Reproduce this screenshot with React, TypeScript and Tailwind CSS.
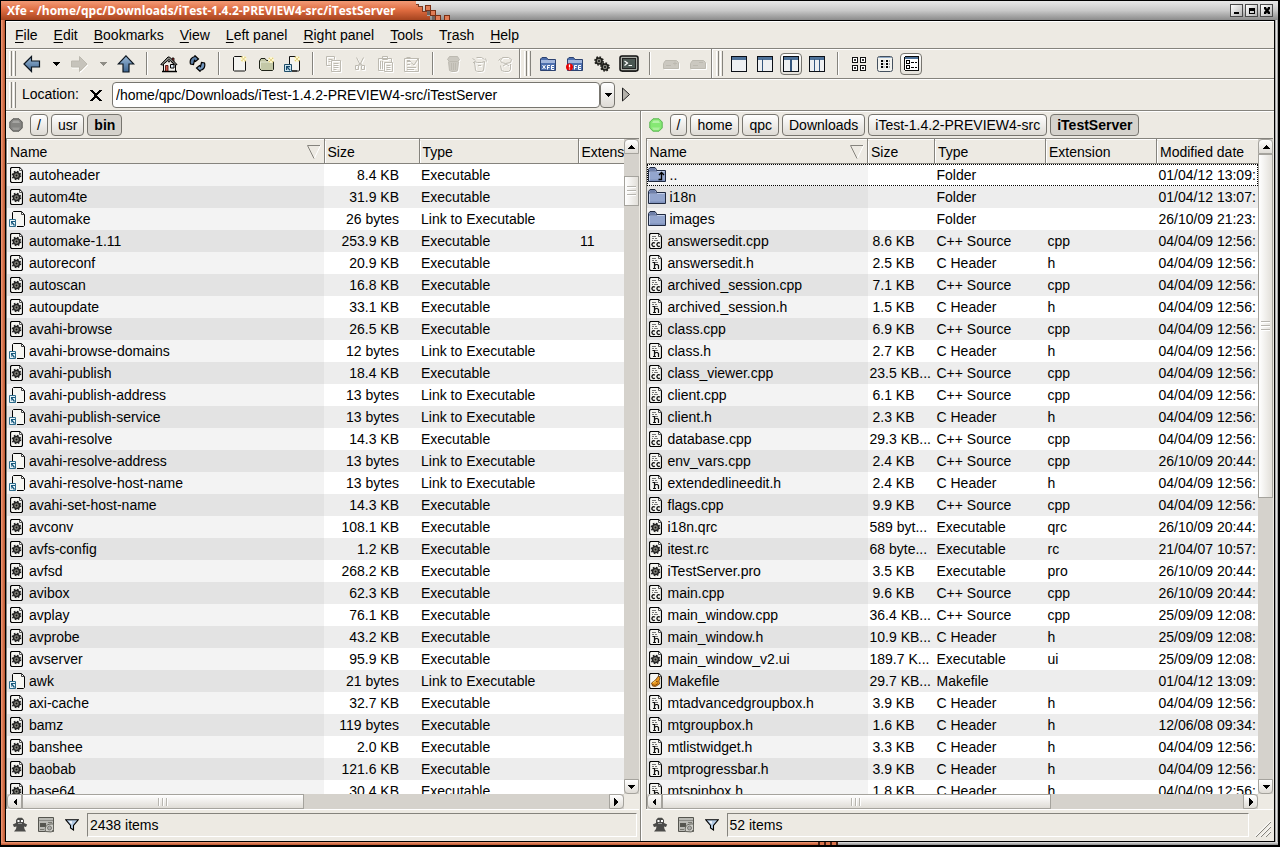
import React from "react";

type Kind = "exe" | "link" | "up" | "folder" | "cc" | "h" | "make";
type Row = { kind: Kind; name: string; size: string; type: string; ext?: string; date?: string };

const leftRows: Row[] = [
  ["autoheader", "8.4 KB"], ["autom4te", "31.9 KB"], ["automake", "26 bytes", "l"], ["automake-1.11", "253.9 KB", "", "11"],
  ["autoreconf", "20.9 KB"], ["autoscan", "16.8 KB"], ["autoupdate", "33.1 KB"], ["avahi-browse", "26.5 KB"],
  ["avahi-browse-domains", "12 bytes", "l"], ["avahi-publish", "18.4 KB"], ["avahi-publish-address", "13 bytes", "l"],
  ["avahi-publish-service", "13 bytes", "l"], ["avahi-resolve", "14.3 KB"], ["avahi-resolve-address", "13 bytes", "l"],
  ["avahi-resolve-host-name", "13 bytes", "l"], ["avahi-set-host-name", "14.3 KB"], ["avconv", "108.1 KB"],
  ["avfs-config", "1.2 KB"], ["avfsd", "268.2 KB"], ["avibox", "62.3 KB"], ["avplay", "76.1 KB"], ["avprobe", "43.2 KB"],
  ["avserver", "95.9 KB"], ["awk", "21 bytes", "l"], ["axi-cache", "32.7 KB"], ["bamz", "119 bytes"], ["banshee", "2.0 KB"],
  ["baobab", "121.6 KB"], ["base64", "30.4 KB"],
].map(([name, size, link, ext]) => ({
  kind: link ? "link" : "exe",
  name,
  size,
  type: link ? "Link to Executable" : "Executable",
  ext,
}));

const typeNames: Record<Kind, string> = {
  exe: "Executable", link: "Link", up: "Folder", folder: "Folder", cc: "C++ Source", h: "C Header", make: "Makefile",
};

const rightRows: Row[] = (
  [
    ["up", "..", "", "", "01/04/12 13:09:"],
    ["folder", "i18n", "", "", "01/04/12 13:07:"],
    ["folder", "images", "", "", "26/10/09 21:23:"],
    ["cc", "answersedit.cpp", "8.6 KB", "cpp", "04/04/09 12:56:"],
    ["h", "answersedit.h", "2.5 KB", "h", "04/04/09 12:56:"],
    ["cc", "archived_session.cpp", "7.1 KB", "cpp", "04/04/09 12:56:"],
    ["h", "archived_session.h", "1.5 KB", "h", "04/04/09 12:56:"],
    ["cc", "class.cpp", "6.9 KB", "cpp", "04/04/09 12:56:"],
    ["h", "class.h", "2.7 KB", "h", "04/04/09 12:56:"],
    ["cc", "class_viewer.cpp", "23.5 KB...", "cpp", "04/04/09 12:56:"],
    ["cc", "client.cpp", "6.1 KB", "cpp", "04/04/09 12:56:"],
    ["h", "client.h", "2.3 KB", "h", "04/04/09 12:56:"],
    ["cc", "database.cpp", "29.3 KB...", "cpp", "04/04/09 12:56:"],
    ["cc", "env_vars.cpp", "2.4 KB", "cpp", "26/10/09 20:44:"],
    ["h", "extendedlineedit.h", "2.4 KB", "h", "04/04/09 12:56:"],
    ["cc", "flags.cpp", "9.9 KB", "cpp", "04/04/09 12:56:"],
    ["exe", "i18n.qrc", "589 byt...", "qrc", "26/10/09 20:44:"],
    ["exe", "itest.rc", "68 byte...", "rc", "21/04/07 10:57:"],
    ["exe", "iTestServer.pro", "3.5 KB", "pro", "26/10/09 20:44:"],
    ["cc", "main.cpp", "9.6 KB", "cpp", "26/10/09 20:44:"],
    ["cc", "main_window.cpp", "36.4 KB...", "cpp", "25/09/09 12:08:"],
    ["h", "main_window.h", "10.9 KB...", "h", "25/09/09 12:08:"],
    ["exe", "main_window_v2.ui", "189.7 K...", "ui", "25/09/09 12:08:"],
    ["make", "Makefile", "29.7 KB...", "", "01/04/12 13:09:"],
    ["h", "mtadvancedgroupbox.h", "3.9 KB", "h", "04/04/09 12:56:"],
    ["h", "mtgroupbox.h", "1.6 KB", "h", "12/06/08 09:34:"],
    ["h", "mtlistwidget.h", "3.3 KB", "h", "04/04/09 12:56:"],
    ["h", "mtprogressbar.h", "3.9 KB", "h", "04/04/09 12:56:"],
    ["h", "mtspinbox.h", "1.8 KB", "h", "04/04/09 12:56:"],
  ] as [Kind, string, string, string, string][]
).map(([kind, name, size, ext, date]) => ({ kind, name, size, type: typeNames[kind], ext, date }));

/* ---------- icons ---------- */

function Svg({ w, h, crisp, children }: { w: number; h: number; crisp?: boolean; children: React.ReactNode }) {
  return (
    <svg width={w} height={h} viewBox={`0 0 ${w} ${h}`} fill="none" aria-hidden="true" className="block shrink-0" shapeRendering={crisp ? "crispEdges" : "auto"}>
      {children}
    </svg>
  );
}

const Gear = ({ x, y, r, c = "#222" }: { x: number; y: number; r: number; c?: string }) => (
  <g>
    <circle cx={x} cy={y} r={r} fill="#85857c" stroke={c} strokeWidth="1.5" />
    <circle cx={x} cy={y} r={r + 1} stroke={c} strokeWidth="1.6" strokeDasharray={`${((r + 1) * 6.283) / 16}`} />
    <circle cx={x} cy={y} r={r / 3} fill="#111" />
  </g>
);

const Page = () => (
  <g>
    <path d="M.5 1.500l1-1h8l3 3v11l-1 1h-10l-1-1z" fill="#f6f6f2" stroke="#000" strokeWidth="1.200" />
    <path d="M9.500 1v2.500h3" fill="#fff" stroke="#555" />
  </g>
);

function FileIcon({ kind }: { kind: Kind }) {
  if (kind === "link")
    return (
      <Svg w={16} h={16}>
        <path d="M3.500 9V1.500l1-1h8l3 3v11l-1 1H8" fill="#f6f6f2" stroke="#000" />
        <path d="M12.500 1v2.500h2.500" stroke="#444" fill="#fff" />
        <path d="M.5 8.500h6v7h-6z" fill="#eaf6fa" stroke="#2d6b8a" />
        <path d="M2 10h4v1H3.500l2.500 3-1 1-2.500-3v2H2z" fill="#17597d" />
        <path d="M8 15.500h6" stroke="#000" />
      </Svg>
    );
  if (kind === "folder" || kind === "up")
    return (
      <Svg w={18} h={16}>
        <path d="M.5 14.500v-12l1.500-2h5l1.500 2v1h9v11z" fill="#93a5cd" stroke="#1f2940" />
        <path d="M1.500 13.500v-9h15" stroke="#c3cfe9" />
        <path d="M2 2h5M1 4h8" stroke="#4a5b85" />
        <path d="M2 12.500h15v1.500H2z" fill="#7f92bd" />
        {kind === "up" && <path d="M10.500 12.500h3V6M11 8l2.500-2.500L16 8" stroke="#000" strokeWidth="1.300" />}
      </Svg>
    );
  return (
    <Svg w={13} h={16}>
      <Page />
      {kind === "exe" && <Gear x={6.5} y={8.5} r={3} />}
      {(kind === "cc" || kind === "h") && <path d="M3 3.500h4M3 5.500h2M6 5.500h2M3 7.500h1M5 7.500h4" stroke="#777" />}
      {kind === "cc" && (
        <path d="M5.800 10.200a1.700 1.900 0 1 0 0 2.800M10.800 10.200a1.700 1.900 0 1 0 0 2.800" stroke="#111" strokeWidth="1.300" />
      )}
      {kind === "h" && <path d="M5.500 7v7M4 7.500h1.500M5.500 10.500l1.500-1h1.500l1 1V14M4 13.500h3" stroke="#111" strokeWidth="1.200" />}
      {kind === "make" && (
        <g>
          <path d="M2.500 10l4-3 3-4 1.500 2-1 3 .5 3-4 2.500-3-.5z" fill="#e8961e" stroke="#6b3b05" strokeWidth=".8" />
          <path d="M3 11.500l3 1 3-2M6 8l3 1" stroke="#8d4c08" />
          <path d="M4 9.500l3-1.500" stroke="#ffd76a" />
        </g>
      )}
    </Svg>
  );
}

const Tri = ({ dir, c = "#000" }: { dir: "u" | "d" | "l" | "r"; c?: string }) => (
  <Svg w={8} h={8} crisp>
    <path d={{ u: "M4 2l4 4H0z", d: "M0 2h8L4 6z", l: "M2 4l4-4v8z", r: "M6 4L2 0v8z" }[dir]} fill={c} />
  </Svg>
);

const Arrow = ({ kind }: { kind: "back" | "fwd" | "up" }) => (
  <Svg w={18} h={18}>
    <defs>
      <linearGradient id="steel" x1="0" y1="0" x2="0" y2="1">
        <stop offset="0" stopColor="#9dbbd8" />
        <stop offset="1" stopColor="#3c6490" />
      </linearGradient>
    </defs>
    {kind === "back" && <path d="M1 9l7.500-7.500V6h8v6h-8v4.500z" fill="url(#steel)" stroke="#0d1620" strokeWidth="1.200" />}
    {kind === "up" && <path d="M9 .8L16.800 9H12v8H6V9H1.200z" fill="url(#steel)" stroke="#0d1620" strokeWidth="1.200" />}
    {kind === "fwd" && (
      <g>
        <path d="M18 10l-7.500 7.500V13H2V6" stroke="#fff" />
        <path d="M17 9L9.500 1.500V6h-8v6h8v4.500z" fill="#c6c3bb" stroke="#bcb9b0" />
      </g>
    )}
  </Svg>
);

const Home = () => (
  <Svg w={18} h={18}>
    <path d="M3.500 9v7.500h12V9" fill="#f3f3ee" stroke="#000" />
    <path d="M12 3h2v5h-2z" fill="#a33" stroke="#000" strokeWidth=".8" />
    <path d="M.8 9.500L8 2h1.500l7.500 7.500-1.500.500L9 4.500 2.500 10z" fill="#8a8a84" stroke="#000" />
    <path d="M5.500 10.500h2.500v6H5.500z" fill="#cf5b4a" stroke="#400" strokeWidth=".8" />
    <path d="M10.500 9.500h3.500v3.500h-3.500z" fill="#dce8f3" stroke="#000" />
    <path d="M8 6.500h2" stroke="#222" strokeWidth="1.500" />
    <path d="M2 16.500h15" stroke="#000" strokeWidth="1.500" />
  </Svg>
);

const Refresh = () => (
  <Svg w={17} h={17}>
    <path d="M1.500 9C.5 5.500 2 2 6 1.500V.7L9.500 4 6.500 6.500 5.500 5.500 4.500 9.500z" fill="#5a7da5" stroke="#000" strokeWidth="1.200" />
    <path d="M15.500 8c1 3.500-.5 7-4.500 7.500v.8L7.500 13l3-2.500 1 1 1-4z" fill="#7397be" stroke="#000" strokeWidth="1.200" />
  </Svg>
);

const Spark = ({ x, y }: { x: number; y: number }) => (
  <g>
    <circle cx={x} cy={y} r="3" fill="#f5e9a8" />
    <path d={`M${x - 3} ${y}h6M${x} ${y - 3}v6`} stroke="#fffce0" strokeWidth="1.400" />
    <path d={`M${x - 2} ${y + 2}l4 -4M${x - 2} ${y - 2}l4 4`} stroke="#d8c36a" strokeWidth=".7" />
  </g>
);

const NewFile = () => (
  <Svg w={16} h={17}>
    <path d="M1.500 2.500l1-1h9l2 3v11l-1 .500h-10l-1-.5z" fill="#f4f4f0" stroke="#111" />
    <Spark x={11.5} y={4} />
  </Svg>
);
const NewFolder = () => (
  <Svg w={17} h={16}>
    <path d="M1.500 12.500V5L3 2.500h4L8.500 4.500h6l1 1v8l-1 1h-11z" fill="#c3c8a6" stroke="#20241a" />
    <path d="M2.500 12V6h11" stroke="#e4e7d3" />
    <Spark x={13} y={4} />
  </Svg>
);
const NewLink = () => (
  <Svg w={17} h={17}>
    <path d="M5.500 9V1.500h8l2 3v11l-1 .500H8" fill="#f4f4f0" stroke="#111" />
    <path d="M.5 9.500h7v7h-7z" fill="#cde6f0" stroke="#1f4d68" />
    <path d="M2 11h4v1.200H4l2.500 2.500-1 1L3.200 13v2H2z" fill="#17496b" />
    <path d="M8 16h5" stroke="#000" />
    <Spark x={13} y={4} />
  </Svg>
);

/* disabled glyphs are engraved: a white copy sits one pixel down and right */
const Engraved = ({ d, fill, w = 18, h = 18 }: { d: string; fill?: boolean; w?: number; h?: number }) => (
  <Svg w={w} h={h}>
    <path d={d} transform="translate(1 1)" stroke="#fff" />
    <path d={d} stroke="#bdbab1" fill={fill ? "#cbc8c0" : "none"} />
  </Svg>
);

const copyD = "M1.500 1.500h8v3M1.500 1.500v9h4M3.500 4.500h4M3.500 6.500h2M6.500 5.500h9v11h-9zM8.500 8.500h5M8.500 10.500h5M8.500 12.500h5M8.500 14.500h3";
const cutD = "M5.500 2.500l4 8M12.500 2.500l-4 8M4.500 10.500h3v4h-3zM10.500 10.500h3v4h-3zM7.500 10l2-2 1.500 2";
const pasteD = "M1.500 3.500h13v4M1.500 3.500v12h5M5.500 1.500h5v3h-5zM7.500 7.500h8v9h-8zM9.500 10.500h4M9.500 12.500h4M9.500 14.500h4M3.500 6v8M5.500 6v8";
const propD = "M1.500 3.500v13h14v-13zM3.500 2.500h4M4 9.500h3M4 12.500h9M4 14.500h7M8 7.500l3 2.500 4.500-7M4 6.500h4M4 5.500h3";
const trashD = "M2.500 4.500l2-3h8l2 3-2 2h-8zM3.500 6.500l1 9 2 1h4l2-1 1-9M6.500 8v7M8.500 8v7M10.500 8v7";
const trash2D = "M3.500 6.500l1 9 2 1h4l2-1 1-9-3 1h-4zM1.500 3.500l3 2M5.500 2.500h5l3 2M14.500 3.500l1 3M2 7l2 2M7 10.500h3";
const trash3D = "M3.500 5.500l2-3h6l3 2-1 3-5 1-4-1zM3.500 10.500l1 5 3 1h4l2-2V9M6 11l3-2 3 2M1.500 5.500l2-2";
const mountD = "M1.500 8.500l2-3h11l2 2v6h-15zM4 10.500h5M11 8.500h4M13 6.500v4";
const umountD = "M1.500 8.500l2-3h11l2 2v6h-15zM4 10.500h5M10 7.500h4";

const XfeFolder = ({ root }: { root?: boolean }) => (
  <Svg w={18} h={16}>
    <path d="M1.500 14.500V3L3 1.500h4.500L9 3.500h7.500v11z" fill="#4d6fae" stroke="#2c4270" />
    <path d="M2 5.500h14" stroke="#a3b7dd" strokeWidth="3" />
    <path d="M3.500 9l3 4M6.500 9l-3 4M8.500 13.500V9.500H11M8.500 11.500h2M15 9.500h-2.500v4H15M12.500 11.500H15" stroke="#fff" />
    {root && (
      <g>
        <circle cx="3.500" cy="11" r="3.500" fill="#e80000" />
        <path d="M3.500 8.500v3M3.500 12.500v1" stroke="#fff" strokeWidth="1.300" />
      </g>
    )}
  </Svg>
);
const Gears = () => (
  <Svg w={18} h={18}>
    <Gear x={6} y={6} r={3} c="#1c1c18" />
    <Gear x={12} y={12} r={3} c="#1c1c18" />
  </Svg>
);
const Terminal = () => (
  <Svg w={20} h={18}>
    <rect x="1" y="1" width="18" height="15" rx="2" fill="#a9ada6" stroke="#111" strokeWidth="1.500" />
    <rect x="3.500" y="3.500" width="13" height="10" fill="#4a5752" stroke="#222" />
    <path d="M5.500 6l3 2-3 2.500M9.500 10.500H13" stroke="#fff" strokeWidth="1.200" />
    <path d="M3 16.500h14" stroke="#222" />
  </Svg>
);
const Panels = ({ d }: { d: string }) => (
  <Svg w={16} h={16} crisp>
    <rect width="16" height="16" fill="#0b0f16" />
    <rect x="1" y="1" width="14" height="3" fill="#4d7199" />
    <rect x="1" y="4" width="14" height="11" fill="#eef0f2" />
    <path d={d} fill="#34567e" />
  </Svg>
);
const BigIcons = () => (
  <Svg w={16} h={16} crisp>
    <path d="M1 1h6v6H1zM9 1h6v6H9zM1 9h6v6H1zM9 9h6v6H9z" fill="#111" />
    <path d="M2 2h4v4H2zM10 2h4v4h-4zM2 10h4v4H2zM10 10h4v4h-4z" fill="#fff" />
    <path d="M3 3h2v2H3zM11 3h2v2h-2zM3 11h2v2H3zM11 11h2v2h-2z" fill="#3a3a38" />
  </Svg>
);
const SmallIcons = () => (
  <Svg w={16} h={16}>
    <rect x=".5" y=".5" width="15" height="15" rx="2" fill="#f2f2ee" stroke="#44505e" />
    <path d="M2 1.500h12" stroke="#8fa9c6" />
    <path d="M4 4h2v2H4zM4 7h2v2H4zM4 10h2v2H4zM9 4h2v2H9zM9 7h2v2H9zM9 10h2v2H9z" fill="#000" />
    <path d="M6.500 5h1M6.500 8h1M6.500 11h1M12 5h1M12 8h1M12 11h1" stroke="#666" />
  </Svg>
);
const Details = () => (
  <Svg w={15} h={15} crisp>
    <path d="M1 0h13l1 1v13l-1 1H1l-1-1V1z" fill="#0b0b0b" />
    <rect x="1" y="1" width="13" height="2" fill="#4d7199" />
    <rect x="1" y="3" width="13" height="11" fill="#fff" />
    <path d="M2 4h4v4H2zM2 9h4v4H2z" fill="#000" />
    <path d="M3 5h2v2H3zM3 10h2v2H3z" fill="#fff" />
    <path d="M7 6h3v1H7zM11 6h2v1h-2zM7 11h3v1H7zM11 11h2v1h-2z" fill="#000" />
  </Svg>
);
const Ghost = () => (
  <Svg w={16} h={16}>
    <path d="M4 12l.5-2.500L2 10 .8 7.500 4 6V3L6 .8h4L12 3v3l3.200 1.500L14 10l-2-.5.500 2.500 1.500 2.500H2z" fill="#4b4b49" />
    <path d="M5.500 3h2v2h-2zM9 3h2v2H9z" fill="#fff" />
    <path d="M6 6.500h4" stroke="#999" />
  </Svg>
);
const Preview = () => (
  <Svg w={17} h={16}>
    <path d="M.5.500h15v14H.5z" fill="#b9b9b4" stroke="#55554f" />
    <path d="M1 3.500h14" stroke="#8b8b86" />
    <path d="M2 6h6v4H2z" fill="#55554f" />
    <path d="M2 12.500h4M10 5.500h4" stroke="#77776f" />
    <path d="M7.500 14.500c-1-5 1-8 8-7.500v5.500l-2 2.500z" fill="#cfcfca" stroke="#66665f" />
    <circle cx="11.500" cy="11" r="2" fill="#aaa" stroke="#77776f" />
  </Svg>
);
const Funnel = () => (
  <Svg w={14} h={12}>
    <path d="M.8.800h12.400L8.500 6.500V11L5.500 9V6.500z" fill="#b4cce6" stroke="#000" strokeWidth="1.100" />
    <path d="M4 2.200h3l-.5 3z" fill="#fff" />
  </Svg>
);
const Bullet = ({ on }: { on?: boolean }) => (
  <Svg w={14} h={14}>
    <path d="M4 .8h6L13.200 4v6L10 13.200H4L.8 10V4z" fill={on ? "#86e874" : "#858582"} stroke={on ? "#5cb553" : "#5a5a58"} />
    <path d="M4.500 2.500h5L11 5H3z" fill={on ? "#b4f2a6" : "#a5a5a2"} />
    <path d="M3 9.500h8L9.500 12h-5z" fill={on ? "#aaf09a" : "#9b9b98"} />
  </Svg>
);
const SortMark = () => (
  <Svg w={14} h={14}>
    <path d="M13 .5H.5L7 13.500" stroke="#85837d" />
    <path d="M13.500 .5L7.500 13" stroke="#fff" />
  </Svg>
);
const TitleBlocks = () => (
  <Svg w={36} h={19} crisp>
    <defs>
      <linearGradient id="orange" x1="0" y1="0" x2="0" y2="19" gradientUnits="userSpaceOnUse">
        <stop offset="0" stopColor="#f29a76" />
        <stop offset=".5" stopColor="#dd6a3e" />
        <stop offset="1" stopColor="#a5441f" />
      </linearGradient>
    </defs>
    <path d="M0 0v3h2v2h4v5h5v5h3v4H0z" fill="url(#orange)" />
    <path d="M0 3h2v2h4v5h5" stroke="#7a3a22" />
    <g fill="#e07c55" stroke="#7a3015">
      <path d="M9.500 4.500h5v5h-5zM14.500 9.500h5v5h-5zM19.500 14.500h5v5h-5zM28.500 14.500h5v5h-5z" />
    </g>
    <path d="M11 10h3v4h-3zM16 15h3v4h-3z" fill="#6e6460" />
  </Svg>
);

/* ---------- toolbar pieces ---------- */

const Grip = () => (
  <div className="flex gap-px px-[3px] py-[2px]">
    <i className="w-[3px] border-l border-r border-l-white border-r-[#85837d]" />
    <i className="w-[3px] border-l border-r border-l-white border-r-[#85837d]" />
  </div>
);
const Sep = () => (
  <div className="flex w-4 justify-center py-[3px]">
    <i className="w-[2px] border-l border-r border-l-[#85837d] border-r-white" />
  </div>
);
const Tool = ({ label, w = "w-[26px]", on, children }: { label: string; w?: string; on?: boolean; children: React.ReactNode }) => (
  <button aria-label={label} className={`flex items-center justify-center ${w}`}>
    {on ? (
      <span className="flex size-[22px] items-center justify-center rounded border border-[#77756f] bg-gradient-to-b from-white to-[#e4e1da]">{children}</span>
    ) : (
      children
    )}
  </button>
);

const menus: [string, string, string][] = [
  ["", "F", "ile"], ["", "E", "dit"], ["", "B", "ookmarks"], ["", "V", "iew"], ["", "L", "eft panel"],
  ["", "R", "ight panel"], ["", "T", "ools"], ["T", "r", "ash"], ["", "H", "elp"],
];

const knob = "flex shrink-0 items-center justify-center border border-[#a5a39d] bg-gradient-to-b from-white to-[#dfdcd6]";

function VScroll({ before, thumb }: { before: string; thumb: string }) {
  return (
    <div className="flex w-[15px] shrink-0 flex-col bg-[#d5d2cc]">
      <button aria-label="Scroll up" className={`${knob} h-[15px] rounded-t-sm`}><Tri dir="u" /></button>
      <div className="flex min-h-0 flex-1 flex-col">
        <div className={`shrink-0 ${before}`} />
        <div className={`flex shrink-0 flex-col items-center justify-center gap-[2px] border border-[#a5a39d] bg-gradient-to-r from-white to-[#e2dfd9] ${thumb}`}>
          <i className="h-[2px] w-[9px] border-t border-b border-t-[#b7b5af] border-b-white" />
          <i className="h-[2px] w-[9px] border-t border-b border-t-[#b7b5af] border-b-white" />
          <i className="h-[2px] w-[9px] border-t border-b border-t-[#b7b5af] border-b-white" />
        </div>
      </div>
      <button aria-label="Scroll down" className={`${knob} h-[15px] rounded-b-sm`}><Tri dir="d" /></button>
    </div>
  );
}

function HScroll({ thumb }: { thumb: string }) {
  return (
    <div className="mr-[15px] flex h-[15px] shrink-0 bg-[#d5d2cc]">
      <button aria-label="Scroll left" className={`${knob} w-[15px] rounded-l-sm`}><Tri dir="l" /></button>
      <div className="flex flex-1">
        <div className={`flex items-center justify-center gap-[2px] border border-[#a5a39d] bg-gradient-to-b from-white to-[#dfdcd6] ${thumb}`}>
          <i className="h-2 w-[2px] border-l border-r border-l-[#b7b5af] border-r-white" />
          <i className="h-2 w-[2px] border-l border-r border-l-[#b7b5af] border-r-white" />
          <i className="h-2 w-[2px] border-l border-r border-l-[#b7b5af] border-r-white" />
        </div>
      </div>
      <button aria-label="Scroll right" className={`${knob} w-[15px] rounded-r-sm`}><Tri dir="r" /></button>
    </div>
  );
}

function PathBar({ parts, active }: { parts: string[]; active?: boolean }) {
  return (
    <div className="flex h-[27px] shrink-0 items-center gap-[3px] pl-[3px]">
      <span className="mr-1"><Bullet on={active} /></span>
      {parts.map((p, i) =>
        i === parts.length - 1 ? (
          <button key={p} className="h-[22px] rounded border border-[#77756f] bg-[#d5d2cc] px-[6px] leading-5 font-bold">{p}</button>
        ) : (
          <button key={p} className="h-[22px] rounded border border-[#77756f] bg-gradient-to-b from-white to-[#dedbd5] px-[6px] leading-5">{p}</button>
        ),
      )}
    </div>
  );
}

type Col = { label: string; w: string };

function FileTable({ cols, rows, wide }: { cols: Col[]; rows: Row[]; wide?: boolean }) {
  return (
    <div className="min-w-0 flex-1 overflow-hidden bg-white">
      <table className="w-full table-fixed border-collapse">
        <thead>
          <tr className="h-6 bg-[#edeae3]">
            {cols.map((c, i) => (
              <th
                key={c.label}
                className={`h-6 overflow-hidden border-t border-b border-t-white border-b-[#85837d] p-0 text-left font-normal whitespace-nowrap ${i < cols.length - 1 ? "border-r border-r-[#85837d]" : ""} ${c.w}`}
              >
                <div className="flex items-center justify-between border-l border-l-white pr-[3px] pl-[2px] leading-[22px]">
                  {c.label}
                  {i === 0 && <SortMark />}
                </div>
              </th>
            ))}
          </tr>
        </thead>
        <tbody>
          {rows.map((r, i) => {
            const odd = i % 2 === 1;
            const clipped = r.size.endsWith("...");
            const folder = r.kind === "folder" || r.kind === "up";
            return (
              <tr key={r.name} className={`h-[22px] whitespace-nowrap ${odd ? "bg-[#ededed]" : "bg-white"} ${r.kind === "up" ? "outline-1 -outline-offset-1 outline-dotted outline-black" : ""}`}>
                <td className={`p-0 ${odd ? "bg-[#e3e3e3]" : "bg-[#f3f3f3]"}`}>
                  <div className="flex h-[22px] items-center">
                    <span className={`flex shrink-0 items-center ${folder ? "w-[23px] pl-px" : r.kind === "link" ? "w-[22px] pl-[2px]" : wide ? "w-[21px] pl-[2px]" : "w-[22px] pl-[3px]"}`}>
                      <FileIcon kind={r.kind} />
                    </span>
                    {r.name}
                  </div>
                </td>
                <td className={`overflow-hidden p-0 ${clipped ? "pl-[2px]" : "pr-5 text-right"}`}>{r.size}</td>
                <td className="overflow-hidden p-0 pl-[2px]">{r.type}</td>
                <td className="overflow-hidden p-0 pl-[2px]">{r.ext}</td>
                {wide && <td className="overflow-hidden p-0 pl-[2px]">{r.date}</td>}
              </tr>
            );
          })}
        </tbody>
      </table>
    </div>
  );
}

function Status({ text, grip }: { text: string; grip?: boolean }) {
  return (
    <footer className="flex h-8 shrink-0 items-center border-t border-white pr-[2px] pb-px pl-[6px]">
      <button aria-label="Hidden files" className="flex w-[26px]"><Ghost /></button>
      <button aria-label="Thumbnails" className="flex w-[27px]"><Preview /></button>
      <button aria-label="Filter" className="flex w-[22px]"><Funnel /></button>
      <div className="h-[24px] flex-1 border border-t-[#85837d] border-r-white border-b-white border-l-[#85837d] pl-[2px] leading-[22px]">{text}</div>
      {grip && (
        <div className="flex w-[22px] justify-end pt-2">
          <Svg w={16} h={16}>
            <path d="M1 16L16 1M6 16L16 6M11 16l5-5" stroke="#85837d" />
            <path d="M0 15.500L15.500 0M5 15.500L15.500 5M10 15.500l5.500-5.500" stroke="#fff" />
          </Svg>
        </div>
      )}
    </footer>
  );
}

const leftCols: Col[] = [
  { label: "Name", w: "w-[317px]" }, { label: "Size", w: "w-[95px]" }, { label: "Type", w: "w-[159px]" }, { label: "Extension", w: "" },
];
const rightCols: Col[] = [
  { label: "Name", w: "w-[221px]" }, { label: "Size", w: "w-[67px]" }, { label: "Type", w: "w-[111px]" },
  { label: "Extension", w: "w-[111px]" }, { label: "Modified date", w: "" },
];

const bar = "flex border-b border-[#85837d] shadow-[0_1px_0_#fff]";

export default function App() {
  return (
    <div className="flex h-screen flex-col overflow-hidden bg-black pt-px pb-[2px] pl-px pr-[2px] font-['Liberation_Sans',Arial,sans-serif] text-[14px] leading-[20px] text-black">
      <div className="flex min-h-0 flex-1 flex-col">
        <header className="flex h-[19px] shrink-0 bg-gradient-to-b from-[#e9e9e9] via-[#c9c9c9] to-[#8c8c8c]">
          <h1 className="flex items-center bg-gradient-to-b from-[#f29a76] via-[#dd6a3e] to-[#a5441f] pr-5 pl-[6px] font-['Open_Sans','Noto_Sans',sans-serif] text-[12px] leading-[18px] font-bold text-white">
            Xfe - /home/qpc/Downloads/iTest-1.4.2-PREVIEW4-src/iTestServer
          </h1>
          <TitleBlocks />
          <div className="flex flex-1 items-center justify-end gap-[2px] pr-[5px]">
            {[
              ["Minimize", "M3 7h5v2H3z"],
              ["Maximize", "M3 3h6v6H3zM4 6h4v2H4z"],
              ["Close", "M3 2h2l1 2 1-2h2v2L7.500 5.500 9 7v2H7L6 7.500 5 9H3V7l1.500-1.500L3 4z"],
            ].map(([label, d]) => (
              <button key={label} aria-label={label} className="flex size-[13px] items-center justify-center border border-[#4a4a4a] bg-gradient-to-br from-white to-[#b5b5b5]">
                <Svg w={11} h={11}><path d={d} fill="#000" fillRule="evenodd" /></Svg>
              </button>
            ))}
          </div>
        </header>

        <div className="flex min-h-0 flex-1">
          <div className="w-1 bg-gradient-to-r from-[#f29a76] to-[#b9532b]" />
          <main className="flex min-w-0 flex-1 flex-col border border-black bg-[#edeae3]">
            <nav className={`${bar} h-7 shrink-0 items-center border-t border-t-white pl-px`}>
              {menus.map(([a, u, b]) => (
                <button key={u + b} className="px-2"><span>{a}</span><span className="underline underline-offset-2">{u}</span>{b}</button>
              ))}
            </nav>

            <div className={`${bar} h-[30px] shrink-0`}>
              <div className="flex border-r border-[#85837d]">
                <Grip />
                <Tool label="Back"><Arrow kind="back" /></Tool>
                <Tool label="Back history" w="w-[21px]"><Tri dir="d" /></Tool>
                <Tool label="Forward"><Arrow kind="fwd" /></Tool>
                <Tool label="Forward history" w="w-[21px]"><Tri dir="d" c="#8f8d86" /></Tool>
                <Tool label="Up"><Arrow kind="up" /></Tool>
                <Sep />
                <Tool label="Home" w="w-7"><Home /></Tool>
                <Tool label="Refresh" w="w-7"><Refresh /></Tool>
                <Sep />
                <Tool label="New file"><NewFile /></Tool>
                <Tool label="New folder"><NewFolder /></Tool>
                <Tool label="New link"><NewLink /></Tool>
                <Sep />
                <Tool label="Copy"><Engraved d={copyD} /></Tool>
                <Tool label="Cut"><Engraved d={cutD} /></Tool>
                <Tool label="Paste"><Engraved d={pasteD} /></Tool>
                <Tool label="Properties"><Engraved d={propD} /></Tool>
                <Sep />
                <Tool label="Trash"><Engraved d={trashD} fill /></Tool>
                <Tool label="Restore"><Engraved d={trash2D} /></Tool>
                <Tool label="Delete"><Engraved d={trash3D} /></Tool>
              </div>
              <div className="flex border-r border-l border-l-white border-r-[#85837d]">
                <Grip />
                <Tool label="New window" w="w-[27px]"><XfeFolder /></Tool>
                <Tool label="New root window" w="w-[27px]"><XfeFolder root /></Tool>
                <Tool label="Run" w="w-[27px]"><Gears /></Tool>
                <Tool label="Terminal" w="w-[27px]"><Terminal /></Tool>
                <Sep />
                <Tool label="Mount"><Engraved d={mountD} fill /></Tool>
                <Tool label="Unmount" w="w-[27px]"><Engraved d={umountD} fill /></Tool>
              </div>
              <div className="flex flex-1 border-l border-white">
                <Grip />
                <Tool label="One panel"><Panels d="" /></Tool>
                <Tool label="Tree and panel"><Panels d="M5 3h1v12H5z" /></Tool>
                <Tool label="Two panels" on><Panels d="M7 3h2v12H7z" /></Tool>
                <Tool label="Tree and two panels"><Panels d="M5 3h1v12H5zM10 3h1v12h-1z" /></Tool>
                <Sep />
                <Tool label="Big icons"><BigIcons /></Tool>
                <Tool label="Small icons"><SmallIcons /></Tool>
                <Tool label="Full list" on><Details /></Tool>
              </div>
            </div>

            <div className={`${bar} h-8 shrink-0 items-center`}>
              <div className="flex h-8 py-px"><Grip /></div>
              <label htmlFor="location" className="w-[61px] pb-px pl-[3px]">Location:</label>
              <button aria-label="Clear location" className="flex w-8 items-center justify-center pt-[2px]">
                <Svg w={12} h={11} crisp><path d="M0 0h3l3 3.500L9 0h3L7.500 5.500 12 11H9L6 7.500 3 11H0l4.500-5.500z" fill="#000" /></Svg>
              </button>
              <input
                id="location"
                defaultValue="/home/qpc/Downloads/iTest-1.4.2-PREVIEW4-src/iTestServer"
                className="h-[26px] w-[488px] rounded-sm border border-[#77756f] bg-white px-[3px] outline-none"
              />
              <button aria-label="Location history" className="flex h-[26px] w-[15px] items-center justify-center rounded border border-[#77756f] bg-gradient-to-b from-white to-[#dedbd5]">
                <Tri dir="d" />
              </button>
              <button aria-label="Go" className="pl-[7px]">
                <Svg w={8} h={15}><path d="M.5 1v13L7.500 7.500z" fill="#b5b2ab" stroke="#222" /></Svg>
              </button>
            </div>

            <div className="flex min-h-0 flex-1">
              <section className="flex min-w-0 flex-[634] flex-col border-r border-[#85837d] pr-px">
                <PathBar parts={["/", "usr", "bin"]} />
                <div className="flex min-h-0 flex-1 flex-col border-t border-l border-[#85837d]">
                  <div className="flex min-h-0 flex-1">
                    <FileTable cols={leftCols} rows={leftRows} />
                    <VScroll before="h-[22px]" thumb="h-[30px]" />
                  </div>
                  <HScroll thumb="w-[48%]" />
                </div>
                <Status text="2438 items" />
              </section>
              <div className="w-[5px] border-l border-white" />
              <section className="flex min-w-0 flex-[629] flex-col pr-px">
                <PathBar active parts={["/", "home", "qpc", "Downloads", "iTest-1.4.2-PREVIEW4-src", "iTestServer"]} />
                <div className="flex min-h-0 flex-1 flex-col border-t border-l border-[#85837d]">
                  <div className="flex min-h-0 flex-1">
                    <FileTable cols={rightCols} rows={rightRows} wide />
                    <VScroll before="h-0" thumb="h-[55%]" />
                  </div>
                  <HScroll thumb="w-[67%]" />
                </div>
                <Status text="52 items" grip />
              </section>
            </div>
          </main>
          <div className="w-[3px] bg-gradient-to-r from-[#8f8f8f] via-[#e4e4e4] to-[#8c8c8c]" />
        </div>
        <div className="flex h-[3px] shrink-0">
          <div className="w-[64%] bg-gradient-to-b from-[#f29a76] to-[#b9532b]" />
          <div className="w-5 bg-[repeating-linear-gradient(90deg,#4a2012_0_2px,#d9734b_2px_6px)]" />
          <div className="flex-1 bg-gradient-to-b from-[#e4e4e4] to-[#8c8c8c]" />
        </div>
      </div>
    </div>
  );
}
